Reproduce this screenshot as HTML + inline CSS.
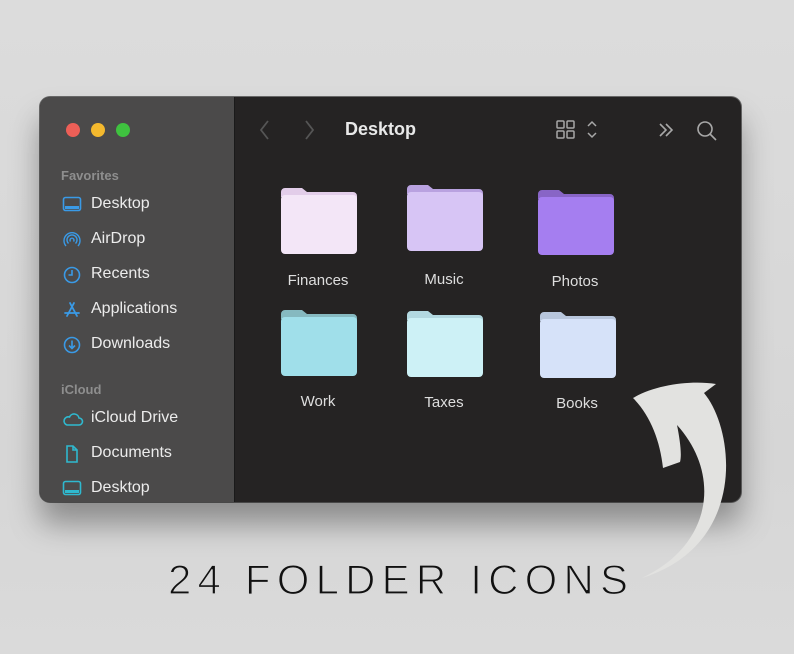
<!DOCTYPE html>
<html><head><style>
body{margin:0;width:794px;height:654px;background:linear-gradient(#dcdcdc,#d6d6d6 70%,#dadada);position:relative;overflow:hidden;font-family:"Liberation Sans",sans-serif}
.win{position:absolute;left:40px;top:97px;width:701px;height:405px;border-radius:10px;background:#252323;box-shadow:0 22px 30px rgba(0,0,0,.35),0 0 0 1px #6a6a6a;overflow:hidden}
.side{position:absolute;left:0;top:0;width:194px;height:405px;background:#4b4a4a;border-right:1px solid #1a1a1a}
.dot{position:absolute;top:26px;width:14px;height:14px;border-radius:50%}
.hd{position:absolute;left:21px;color:#8e8e8e;font-size:13px;font-weight:bold}
.it{position:absolute;left:51px;color:#ececec;font-size:16px}
.ic{position:absolute;left:22px}
.lbl{position:absolute;color:#dedede;font-size:15px;width:120px;text-align:center}
</style></head><body>
<div class="win">
<div class="side">
<div class="dot" style="left:26px;background:#ed5f57"></div>
<div class="dot" style="left:51px;background:#f4b92e"></div>
<div class="dot" style="left:76px;background:#3fc23f"></div>
<div class="hd" style="top:71px">Favorites</div>
<div class="hd" style="top:285px">iCloud</div>
<svg class="ic" style="top:98px" width="20" height="18" viewBox="0 0 20 18"><rect x="1.5" y="2.5" width="17" height="13" rx="2" fill="none" stroke="#3a9ae6" stroke-width="1.6"/><rect x="3" y="11" width="14" height="3" fill="#3a9ae6"/></svg>
<div class="it" style="top:98px">Desktop</div>
<svg class="ic" style="top:133px" width="20" height="20" viewBox="0 0 20 20" fill="none" stroke="#3a9ae6" stroke-width="1.4"><path d="M4 16A8 8 0 1 1 16 16"/><path d="M6.5 13.5A5 5 0 1 1 13.5 13.5"/><path d="M8.5 11.5A2 2 0 1 1 11.5 11.5"/></svg>
<div class="it" style="top:133px">AirDrop</div>
<svg class="ic" style="top:168px" width="20" height="20" viewBox="0 0 20 20" fill="none" stroke="#3a9ae6" stroke-width="1.6"><circle cx="10" cy="10" r="7.5"/><path d="M10 5v5H6.5"/></svg>
<div class="it" style="top:168px">Recents</div>
<svg class="ic" style="top:203px" width="20" height="20" viewBox="0 0 20 20" fill="none" stroke="#3a9ae6" stroke-width="1.8" stroke-linecap="round"><path d="M8 3l7 13M12 3L5 16M3 13h14"/></svg>
<div class="it" style="top:203px">Applications</div>
<svg class="ic" style="top:238px" width="20" height="20" viewBox="0 0 20 20" fill="none" stroke="#3a9ae6" stroke-width="1.6"><circle cx="10" cy="10" r="7.5"/><path d="M10 5.5v8M7 10.5l3 3 3-3"/></svg>
<div class="it" style="top:238px">Downloads</div>
<svg class="ic" style="top:313px" width="22" height="18" viewBox="0 0 22 18" fill="none" stroke="#2fb9cf" stroke-width="1.6"><path d="M5 15h12a3.5 3.5 0 0 0 0-7 5 5 0 0 0-9.5-1A4 4 0 0 0 5 15z"/></svg>
<div class="it" style="top:312px">iCloud Drive</div>
<svg class="ic" style="top:347px" width="20" height="20" viewBox="0 0 20 20" fill="none" stroke="#2fb9cf" stroke-width="1.6"><path d="M5 2h6l4 4v12H5z"/><path d="M11 2v4h4"/></svg>
<div class="it" style="top:347px">Documents</div>
<svg class="ic" style="top:382px" width="20" height="18" viewBox="0 0 20 18"><rect x="1.5" y="2.5" width="17" height="13" rx="2" fill="none" stroke="#2fb9cf" stroke-width="1.6"/><rect x="3" y="11" width="14" height="3" fill="#2fb9cf"/></svg>
<div class="it" style="top:382px">Desktop</div>
</div>
<svg style="position:absolute;left:220px;top:20px" width="60" height="26" fill="none" stroke="#555" stroke-width="1.8"><path d="M14 4l-7 9 7 9M52 4l7 9-7 9" transform="translate(-6,0)"/></svg>
<div style="position:absolute;left:305px;top:22px;color:#e8e8e8;font-size:18px;font-weight:bold">Desktop</div>
<svg style="position:absolute;left:515px;top:22px" width="50" height="22" fill="none" stroke="#a8a8a8" stroke-width="1.5"><rect x="2" y="2" width="7" height="7" rx="1"/><rect x="12" y="2" width="7" height="7" rx="1"/><rect x="2" y="12" width="7" height="7" rx="1"/><rect x="12" y="12" width="7" height="7" rx="1"/><path d="M33 7l4-4 4 4M33 14l4 4 4-4"/></svg>
<svg style="position:absolute;left:615px;top:22px" width="80" height="24" fill="none" stroke="#a8a8a8" stroke-width="1.6"><path d="M5 5l6 6-6 6M11 5l6 6-6 6"/><circle cx="50" cy="10" r="7"/><path d="M55 15l6 6"/></svg>
<svg style="position:absolute;left:0;top:0" width="701" height="405">
<path d="M241 100v-5a4 4 0 0 1 4-4h17l5 4h46a4 4 0 0 1 4 4v6z" fill="#e2cde9"/><rect x="241" y="98" width="76" height="59" rx="4" fill="#f3e6f7"/>
<path d="M367 97v-5a4 4 0 0 1 4-4h17l5 4h46a4 4 0 0 1 4 4v6z" fill="#b9a2e0"/><rect x="367" y="95" width="76" height="59" rx="4" fill="#d7c5f5"/>
<path d="M498 102v-5a4 4 0 0 1 4-4h17l5 4h46a4 4 0 0 1 4 4v6z" fill="#8865c6"/><rect x="498" y="100" width="76" height="58" rx="4" fill="#a57ef0"/>
<path d="M241 222v-5a4 4 0 0 1 4-4h17l5 4h46a4 4 0 0 1 4 4v6z" fill="#86b9c0"/><rect x="241" y="220" width="76" height="59" rx="4" fill="#a0dfea"/>
<path d="M367 223v-5a4 4 0 0 1 4-4h17l5 4h46a4 4 0 0 1 4 4v6z" fill="#b2d8e0"/><rect x="367" y="221" width="76" height="59" rx="4" fill="#cdf1f6"/>
<path d="M500 224v-5a4 4 0 0 1 4-4h17l5 4h46a4 4 0 0 1 4 4v6z" fill="#b8c6dc"/><rect x="500" y="222" width="76" height="59" rx="4" fill="#d6e2f9"/>
</svg>
<div class="lbl" style="left:218px;top:175px">Finances</div>
<div class="lbl" style="left:344px;top:174px">Music</div>
<div class="lbl" style="left:475px;top:176px">Photos</div>
<div class="lbl" style="left:218px;top:296px">Work</div>
<div class="lbl" style="left:344px;top:297px">Taxes</div>
<div class="lbl" style="left:477px;top:298px">Books</div>
</div>
<svg style="position:absolute;left:0;top:0" width="794" height="654">
<path d="M633 398C655 385 690 380 716 384L704 393C735 430 748 545 642 578C712 545 722 475 677 425C680 440 682 455 680 462L663 468C660 440 650 415 633 398Z" fill="#e2e2e0"/>
<text x="168" y="594" textLength="460" lengthAdjust="spacing" font-family="Liberation Sans" font-size="42" fill="#111" stroke="#d8d8d8" stroke-width="1.3">24 FOLDER ICONS</text>
</svg>
</body></html>
